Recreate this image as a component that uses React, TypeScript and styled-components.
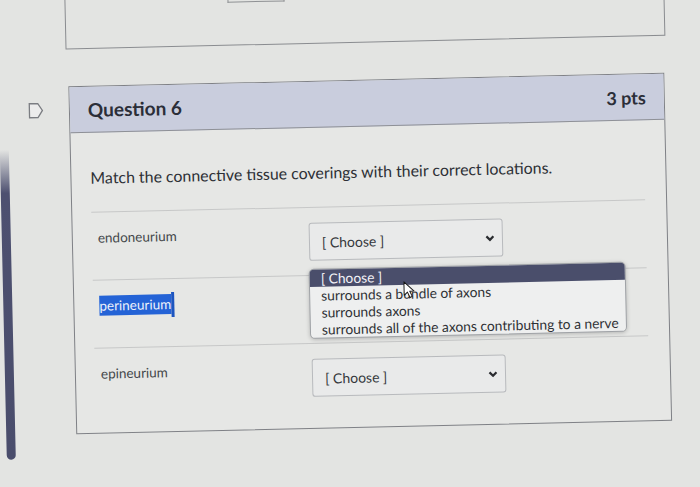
import styled, { createGlobalStyle } from 'styled-components'

const GlobalStyle = createGlobalStyle`
  html, body {
    margin: 0;
    padding: 0;
    background: #e3e4e2;
    overflow: hidden;
  }
  body {
    font-family: Lato, "Noto Sans", sans-serif;
    color: #2d3035;
  }
`

// the screenshot is a photo taken at a slight angle, so the whole page is tilted a little
const Page = styled.div`
  width: 700px;
  height: 487px;
  display: flex;
  transform: rotate(-1.3deg);
  transform-origin: 350px 243px;
`

const Rail = styled.div`
  width: 20px;
  flex-shrink: 0;
`

const RailBar = styled.div`
  margin: 142px 0 0 2px;
  width: 9px;
  height: 310px;
  border-radius: 0 0 5px 5px;
  background: linear-gradient(to bottom, rgba(76, 79, 108, 0) 0%, #4d5070 14%, #4a4d6c 100%);
`

const Main = styled.div`
  flex: 1;
  display: flex;
  flex-direction: column;
`

const TopBox = styled.div`
  margin: -20px 0 0 50px;
  width: 600px;
  height: 63px;
  box-sizing: border-box;
  border: 1px solid #8a8c90;
  padding-left: 162px;
`

const TopField = styled.div`
  width: 57px;
  height: 19px;
  box-sizing: border-box;
  border: 1px solid #8f9194;
  border-top: none;
`

const QuestionRow = styled.div`
  display: flex;
  align-items: flex-start;
  margin-top: 37px;
`

const FlagSlot = styled.div`
  width: 52px;
  height: 47px;
  box-sizing: border-box;
  padding-left: 11px;
  display: flex;
  align-items: center;
`

const Card = styled.div`
  width: 596px;
  box-sizing: border-box;
  border: 1px solid #7f8186;
  background: #e6e7e5;
`

const Header = styled.div`
  height: 45px;
  border-bottom: 1px solid #8e9096;
  background: #c9cddd;
  display: flex;
  align-items: center;
  justify-content: space-between;
  padding: 0 18px;
`

const Title = styled.h2`
  margin: 0;
  font-size: 19px;
  font-weight: 700;
  color: #2b2e38;
`

const Points = styled.span`
  font-size: 18px;
  font-weight: 700;
  color: #2b2e38;
`

const Body = styled.div`
  padding: 34px 21px 17px 19px;
`

const Prompt = styled.p`
  margin: 0 0 23px;
  font-size: 15.9px;
  line-height: 22px;
  color: #2d3035;
`

const MatchRow = styled.div`
  display: flex;
  align-items: flex-start;
  border-top: 1px solid #c7c8c8;
  padding: 15px 0 14px 6px;
`

const Label = styled.div`
  width: 211px;
  flex-shrink: 0;
  font-size: 13.5px;
  line-height: 20px;
  color: #44474b;
`

const Highlight = styled.span`
  position: relative;
  background: #2463d6;
  color: #eef2fb;
  padding: 2px 0;

  &::after {
    content: '';
    position: absolute;
    right: -3px;
    top: -2px;
    bottom: -3px;
    width: 3px;
    background: #1d55c0;
  }
`

const SelectBox = styled.div`
  position: relative;
  width: 194px;
  height: 38px;
  box-sizing: border-box;
  border: 1px solid #b8babd;
  border-radius: 3px;
  background: #e9eaea;
  display: flex;
  align-items: center;
  justify-content: space-between;
  padding: 0 7px 0 12px;
  font-size: 14px;
  color: #35383c;
`

const Listbox = styled.div`
  position: absolute;
  left: -2px;
  top: -23px;
  z-index: 2;
  background: #eeefef;
  border: 1px solid #9fa2a6;
  border-radius: 5px;
  box-shadow: 0 1px 4px rgba(0, 0, 0, 0.22);
  font-size: 13.8px;
  line-height: 17px;
  white-space: nowrap;
  color: #2e3135;
`

const Option = styled.div<{ $active?: boolean }>`
  padding: 0 7px 0 11px;
  background: ${p => (p.$active ? '#4a4e6b' : 'transparent')};
  color: ${p => (p.$active ? '#f2f2f7' : '#2e3135')};
  border-radius: ${p => (p.$active ? '4px 4px 0 0' : '0')};
`

const Pointer = styled.svg`
  position: absolute;
  left: 93px;
  top: 13px;
`

function Chevron() {
  return (
    <svg width="10" height="7" viewBox="0 0 10 7">
      <polyline points="1.5,1.5 5,5 8.5,1.5" fill="none" stroke="#2a2c30" strokeWidth="2.2" />
    </svg>
  )
}

function FlagIcon() {
  return (
    <svg width="16" height="17" viewBox="0 0 16 17">
      <path d="M1.5 1.5 H10 L14.5 8.5 L10 15.5 H1.5 Z" fill="#ececec" stroke="#7b7d82" strokeWidth="1.3" />
    </svg>
  )
}

const options = [
  'surrounds a bundle of axons',
  'surrounds axons',
  'surrounds all of the axons contributing to a nerve',
]

export default function App() {
  return (
    <>
      <GlobalStyle />
      <Page>
        <Rail>
          <RailBar />
        </Rail>
        <Main>
          <TopBox>
            <TopField />
          </TopBox>
          <QuestionRow>
            <FlagSlot>
              <FlagIcon />
            </FlagSlot>
            <Card>
              <Header>
                <Title>Question 6</Title>
                <Points>3 pts</Points>
              </Header>
              <Body>
                <Prompt>Match the connective tissue coverings with their correct locations.</Prompt>

                <MatchRow>
                  <Label>endoneurium</Label>
                  <SelectBox>
                    <span>[ Choose ]</span>
                    <Chevron />
                  </SelectBox>
                </MatchRow>

                <MatchRow>
                  <Label>
                    <Highlight>perineurium</Highlight>
                  </Label>
                  <SelectBox>
                    <span>[ Choose ]</span>
                    <Chevron />
                    <Listbox>
                      <Option $active>[ Choose ]</Option>
                      {options.map(o => (
                        <Option key={o}>{o}</Option>
                      ))}
                      <Pointer width="12" height="18" viewBox="0 0 12 18">
                        <path
                          d="M1 1 L1 14.5 L4.3 11.4 L6.8 16.8 L9 15.8 L6.6 10.5 L11 10.5 Z"
                          fill="#ffffff"
                          stroke="#1a1a1a"
                          strokeWidth="1"
                          strokeLinejoin="round"
                        />
                      </Pointer>
                    </Listbox>
                  </SelectBox>
                </MatchRow>

                <MatchRow>
                  <Label>epineurium</Label>
                  <SelectBox>
                    <span>[ Choose ]</span>
                    <Chevron />
                  </SelectBox>
                </MatchRow>
              </Body>
            </Card>
          </QuestionRow>
        </Main>
      </Page>
    </>
  )
}
